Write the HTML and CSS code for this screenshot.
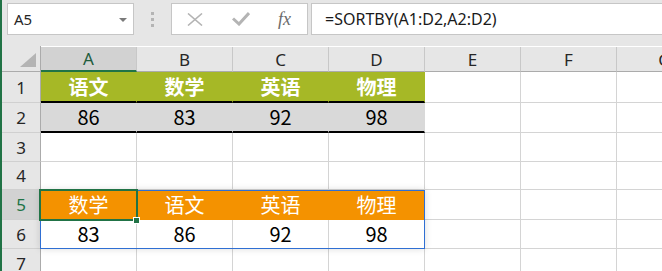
FILE: index.html
```html
<!DOCTYPE html>
<html lang="zh-CN">
  <head>
    <title>SORTBY</title>
    <link rel="stylesheet" href="styles.css">
  </head>

  <body>
    <div class="excel">
      <!-- 편집줄 -->
      <div class="formula-bar">
        <div class="name-box">
          <span>A5</span>
          <i class="caret"></i>
        </div>
        <div class="grip"><i></i><i></i><i></i></div>
        <div class="func-box">
          <svg width="16" height="13" viewBox="0 0 16 13" aria-hidden="true">
            <path d="M1 0.5 15 12.5M15 0.5 1 12.5" stroke="#b4b4b4" stroke-width="1.6" fill="none" />
          </svg>
          <svg width="18" height="14" viewBox="0 0 18 14" aria-hidden="true">
            <path d="M1 6.5 7 12 17 1" stroke="#b4b4b4" stroke-width="3" fill="none" />
          </svg>
          <span class="fx">fx</span>
        </div>
        <div class="formula">=SORTBY(A1:D2,A2:D2)</div>
      </div>

      <!-- 시트 -->
      <div class="sheet">
        <div class="corner"><i></i></div>
        <div class="hd sel">A</div>
        <div class="hd">B</div>
        <div class="hd">C</div>
        <div class="hd">D</div>
        <div class="hd">E</div>
        <div class="hd">F</div>
        <div class="hd">G</div>

        <div class="rh">1</div>
        <div class="c head">语文</div>
        <div class="c head">数学</div>
        <div class="c head">英语</div>
        <div class="c head">物理</div>
        <div class="c"></div>
        <div class="c"></div>
        <div class="c"></div>

        <div class="rh">2</div>
        <div class="c score">86</div>
        <div class="c score">83</div>
        <div class="c score">92</div>
        <div class="c score">98</div>
        <div class="c"></div>
        <div class="c"></div>
        <div class="c"></div>

        <div class="rh">3</div>
        <div class="c"></div>
        <div class="c"></div>
        <div class="c"></div>
        <div class="c"></div>
        <div class="c"></div>
        <div class="c"></div>
        <div class="c"></div>

        <div class="rh">4</div>
        <div class="c"></div>
        <div class="c"></div>
        <div class="c"></div>
        <div class="c"></div>
        <div class="c"></div>
        <div class="c"></div>
        <div class="c"></div>

        <div class="rh sel">5</div>
        <div class="c sorted">数学</div>
        <div class="c sorted">语文</div>
        <div class="c sorted">英语</div>
        <div class="c sorted">物理</div>
        <div class="c"></div>
        <div class="c"></div>
        <div class="c"></div>

        <div class="rh">6</div>
        <div class="c">83</div>
        <div class="c">86</div>
        <div class="c">92</div>
        <div class="c">98</div>
        <div class="c"></div>
        <div class="c"></div>
        <div class="c"></div>

        <div class="rh">7</div>
        <div class="c"></div>
        <div class="c"></div>
        <div class="c"></div>
        <div class="c"></div>
        <div class="c"></div>
        <div class="c"></div>
        <div class="c"></div>

        <!-- 분산 범위와 선택 셀 -->
        <div class="spill"></div>
        <div class="cursor"></div>
        <div class="handle"></div>
      </div>
    </div>
  </body>
</html>
```

FILE: styles.css
```css
html,
body {
  margin: 0;
  height: 100%;
  overflow: hidden;
  background-color: #e6e6e6;
}

.excel {
  display: flex;
  flex-flow: column;
  height: 271px;
  border-left: 2px solid #217346;
  font-family: "Noto Sans", "Noto Sans CJK SC", sans-serif;
  color: #262626;
}

.formula-bar {
  display: flex;
  align-items: flex-start;
  height: 46px;
  padding-top: 3px;
  box-sizing: border-box;
}

.name-box,
.func-box,
.formula {
  box-sizing: border-box;
  height: 32px;
  border: 1px solid #c6c6c6;
  background-color: #fff;
  display: flex;
  align-items: center;
}

.name-box {
  width: 127px;
  margin-left: 5px;
  padding: 0 6px 0 6px;
  justify-content: space-between;
  font-size: 15px;

  .caret {
    width: 0;
    height: 0;
    border-left: 4px solid transparent;
    border-right: 4px solid transparent;
    border-top: 4px solid #7a7a7a;
    margin-top: 2px;
  }
}

.grip {
  width: 37px;
  display: flex;
  flex-flow: column;
  align-items: center;
  gap: 3px;
  padding-top: 9px;

  i {
    width: 3px;
    height: 3px;
    background-color: #b4b4b4;
  }
}

.func-box {
  width: 137px;
  padding-left: 15px;
  gap: 29px;

  svg {
    flex: none;
  }

  .fx {
    margin-left: -1px;
    font-family: "Liberation Serif", serif;
    font-style: italic;
    font-size: 18px;
    color: #6b6b6b;
  }
}

.formula {
  flex: 1;
  margin-left: 3px;
  margin-right: -2px;
  padding-left: 13px;
  font-size: 16px;
  color: #1a1a1a;
}

.sheet {
  position: relative;
  flex: 1;
  display: grid;
  grid-template-columns: 39px repeat(7, 96px);
  grid-template-rows: 26px 31px 30px 29px 28px 30px 29px 30px;
  background-color: #fff;
  overflow: hidden;
}

.corner,
.hd,
.rh {
  background-color: #e6e6e6;
  box-sizing: border-box;
}

.corner {
  position: relative;
  border-right: 1px solid #ababab;
  border-bottom: 1px solid #ababab;

  i {
    position: absolute;
    right: 4px;
    bottom: 4px;
    width: 0;
    height: 0;
    border-left: 16px solid transparent;
    border-bottom: 14px solid #b4b4b4;
  }
}

.hd {
  display: flex;
  justify-content: center;
  align-items: center;
  margin-top: 1px;
  border-right: 1px solid #c8c8c8;
  border-bottom: 1px solid #ababab;
  font-size: 17px;

  &.sel {
    background-color: #d2d2d2;
    border-bottom: 2px solid #217346;
    color: #1d5c3c;
  }
}

.rh {
  display: flex;
  justify-content: center;
  align-items: center;
  border-right: 1px solid #ababab;
  border-bottom: 1px solid #d0d0d0;
  font-size: 17px;

  &.sel {
    background-color: #d2d2d2;
    color: #217346;
  }
}

.c {
  box-sizing: border-box;
  display: flex;
  justify-content: center;
  align-items: center;
  border-right: 1px solid #d4d4d4;
  border-bottom: 1px solid #d4d4d4;
  font-family: "Noto Sans CJK SC", sans-serif;
  font-size: 20px;
  line-height: 1;
  color: #000;

  &.head {
    background-color: #a6b826;
    border-right-color: #a6b826;
    border-bottom: 2px solid #000;
    color: #fff;
    font-weight: 700;
  }

  &.score {
    background-color: #d9d9d9;
    border-right-color: #d9d9d9;
    border-bottom: 2px solid #000;
  }

  &.sorted {
    background-color: #f49200;
    border-right-color: #f49200;
    border-bottom-color: #f49200;
    color: #fff;
  }
}

.spill {
  position: absolute;
  left: 38px;
  top: 144px;
  width: 385px;
  height: 59px;
  box-sizing: border-box;
  border: 1px solid #2f6fd3;
  box-shadow: 0 0 7px rgb(0 0 0 / 14%);
  pointer-events: none;
}

.cursor {
  position: absolute;
  left: 37px;
  top: 143px;
  width: 99px;
  height: 32px;
  box-sizing: border-box;
  border: 2px solid #217346;
}

.handle {
  position: absolute;
  left: 131px;
  top: 171px;
  width: 5px;
  height: 5px;
  background-color: #217346;
  border: 1px solid #fff;
}
```
